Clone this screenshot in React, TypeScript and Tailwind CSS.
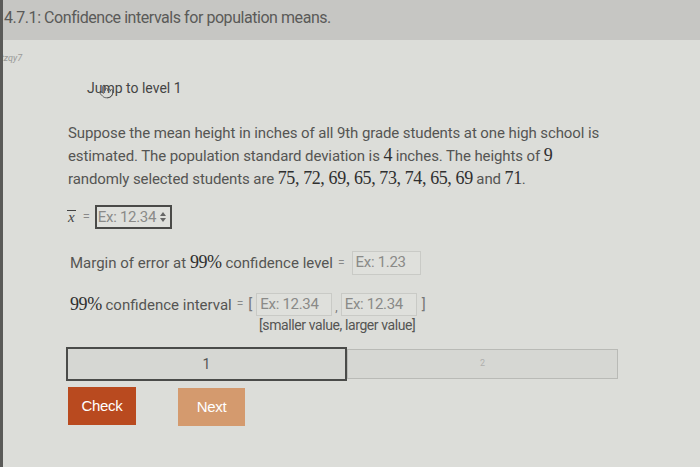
import React from "react";
import { Pointer } from "lucide-react";

const sans = { fontFamily: "Roboto, 'Liberation Sans', sans-serif" };
const serif = { fontFamily: "'Liberation Serif', 'DejaVu Serif', serif" };

function N({ children }: { children: React.ReactNode }) {
  return (
    <span className="text-[18px] text-[#2f2f2f] tracking-[-0.4px]" style={serif}>
      {children}
    </span>
  );
}

function Box({ w, h, text }: { w: string; h: string; text: string }) {
  return (
    <span
      className={`inline-flex items-center border border-[#c9cac6] bg-[#dfe0dc] pl-[3px] text-[#8a8a88] text-[15px] tracking-[-0.3px] ${w} ${h}`}
    >
      {text}
    </span>
  );
}

export default function App() {
  return (
    <div
      className="w-[700px] h-[467px] bg-[#dcddd9] border-l-[3px] border-[#5a5a58] overflow-hidden text-[#555]"
      style={sans}
    >
      <div className="h-[40px] bg-[#c6c6c3] flex items-center pl-[1px] text-[16px] tracking-[-0.45px] text-[#5a5a58] pb-[4px]">
        4.7.1: Confidence intervals for population means.
      </div>
      <div className="h-[30px] pt-[12px] text-[9px] italic text-[#9a9a98] -ml-[2px]">tzqy7</div>
      <div className="relative pl-[84px] h-[52px] pt-[8px] text-[14px] leading-[20px] text-[#444]">
        Jump to level 1
        <Pointer className="absolute left-[96px] top-[14px] text-[#555]" size={15} strokeWidth={1.5} />
      </div>
      <div className="pl-[65px] text-[15px] tracking-[-0.1px] leading-[22px] text-[#555553] w-[640px]">
        <div className="whitespace-nowrap">Suppose the mean height in inches of all 9th grade students at one high school is</div>
        <div className="whitespace-nowrap">
          estimated. The population standard deviation is <N>4</N> inches. The heights of <N>9</N>
        </div>
        <div className="whitespace-nowrap">
          randomly selected students are <N>75, 72, 69, 65, 73, 74, 65, 69</N> and <N>71</N>.
        </div>
      </div>
      <div className="pl-[64px] mt-[15px] flex items-center h-[24px]">
        <span className="text-[15px] italic text-[#444]" style={serif}>
          <span className="border-t border-[#444] leading-[13px] inline-block px-[1px]">x</span>
        </span>
        <span className="text-[13px] text-[#888] ml-[7px] mr-[5px]">=</span>
        <span className="inline-flex items-center h-[24px] w-[77px] border-2 border-[#4a4a48] bg-[#dfe0dc] pl-[1px] text-[15px] tracking-[-0.3px] text-[#8a8a88]">
          Ex: 12.34
          <svg width="8" height="12" viewBox="0 0 8 12" className="ml-[3px]">
            <path d="M4 1 L7 5 L1 5 Z" fill="#666" />
            <path d="M4 11 L7 7 L1 7 Z" fill="#666" />
          </svg>
        </span>
      </div>
      <div className="pl-[67px] mt-[21px] flex items-center h-[25px] text-[15px] text-[#555553]">
        <span className="whitespace-nowrap">
          Margin of error at <N>99%</N> confidence level
        </span>
        <span className="text-[12px] text-[#888] ml-[5px] mr-[7px]">=</span>
        <Box w="w-[69px]" h="h-[24px]" text="Ex: 1.23" />
      </div>
      <div className="pl-[67px] mt-[17px] flex items-center h-[24px] text-[15px] text-[#555553]">
        <span className="whitespace-nowrap">
          <N>99%</N> confidence interval
        </span>
        <span className="text-[12px] text-[#888] ml-[5px]">=</span>
        <span className="text-[15px] text-[#777] ml-[5px] mr-[4px]">[</span>
        <Box w="w-[76px]" h="h-[23px]" text="Ex: 12.34" />
        <span className="text-[12px] text-[#777] mx-[3px] self-end">,</span>
        <Box w="w-[76px]" h="h-[23px]" text="Ex: 12.34" />
        <span className="text-[15px] text-[#777] ml-[5px]">]</span>
      </div>
      <div className="pl-[256px] mt-[0px] text-[14px] tracking-[-0.4px] text-[#555553] h-[18px] leading-[18px] whitespace-nowrap">
        [smaller value, larger value]
      </div>
      <div className="pl-[63px] mt-[13px] flex">
        <div className="w-[281px] h-[34px] border-2 border-[#4a4b49] bg-[#d6d7d3] flex items-center justify-center text-[14px] text-[#555]">
          1
        </div>
        <div className="w-[271px] h-[30px] mt-[2px] border border-[#b9bab6] bg-[#d6d7d3] flex items-center justify-center text-[9px] text-[#b0b0ae]">
          2
        </div>
      </div>
      <div className="pl-[65px] mt-[6px] flex gap-[42px]">
        <div
          className="w-[68px] h-[38px] bg-[#b94a1f] flex items-center justify-center text-[15px] text-white tracking-[-0.3px]"
          style={{ fontFamily: "'Liberation Sans', sans-serif" }}
        >
          Check
        </div>
        <div
          className="w-[67px] h-[38px] mt-[1px] bg-[#d49a6e] flex items-center justify-center text-[15px] text-white tracking-[-0.3px]"
          style={{ fontFamily: "'Liberation Sans', sans-serif" }}
        >
          Next
        </div>
      </div>
    </div>
  );
}
